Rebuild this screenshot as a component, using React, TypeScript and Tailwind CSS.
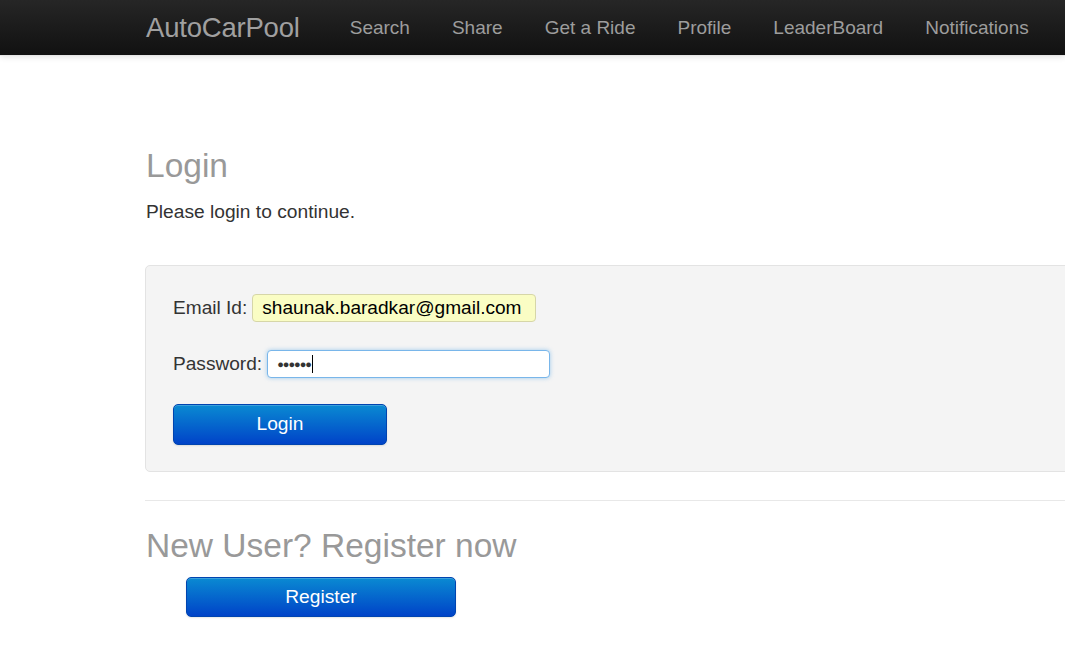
const NAV_ITEMS = ["Search", "Share", "Get a Ride", "Profile", "LeaderBoard", "Notifications"];

const btnClass =
  "rounded-[5px] border border-[#0044b0] bg-[linear-gradient(#0a8ad2,#0043c8)] text-[19.2px] text-white shadow-[inset_0_1px_0_rgba(255,255,255,0.2),0_1px_2px_rgba(0,0,0,0.1)]";

export default function App() {
  return (
    <div className="h-[652px] w-[1065px] overflow-hidden bg-white font-['Liberation_Sans',Arial,sans-serif] text-[#333]">
      <nav className="h-[56px] border-b border-[#e5e5e5] bg-[linear-gradient(#262626,#111111)] shadow-[0_1px_6px_rgba(0,0,0,0.12)]">
        <div className="flex h-[55px] items-center pl-[146px]">
          <span className="mr-[29px] text-[27.5px] tracking-[-0.2px] text-[#a0a0a0]">AutoCarPool</span>
          {NAV_ITEMS.map((item) => (
            <a key={item} className="px-[21px] pt-[2px] text-[19px] text-[#9d9d9d]">
              {item}
            </a>
          ))}
        </div>
      </nav>

      <main className="pl-[145px]">
        <h1 className="mt-[90px] pl-px text-[33.5px] leading-[40px] text-[#999]">Login</h1>
        <p className="mt-[13px] pl-px text-[19.2px] leading-[26px] text-[#333]">Please login to continue.</p>

        <form className="mt-[40px] h-[207px] w-[960px] rounded-[5px] border border-[#e3e3e3] bg-[#f4f4f4] pl-[27px] pt-[28px]">
          <div className="flex items-center">
            <label className="text-[19.1px] text-[#333]">Email Id:</label>
            <div className="ml-[5px] flex h-[28px] w-[284px] items-center rounded-[4px] border border-[#d6d6a8] bg-[#fafdc4] pl-[9px] text-[19.1px] text-black">
              shaunak.baradkar@gmail.com
            </div>
          </div>
          <div className="mt-[27px] flex items-center">
            <label className="text-[19.1px] text-[#333]">Password:</label>
            <div className="ml-[5px] flex h-[28px] w-[283px] items-center rounded-[4px] border border-[#79b6ea] bg-white pl-[9px] text-[11px] tracking-[-1px] text-[#333] shadow-[0_0_4px_rgba(102,175,233,0.6)]">
              ●●●●●●
              <span className="ml-[1px] h-[18px] w-px bg-black" />
            </div>
          </div>
          <button type="button" className={`${btnClass} mt-[26px] h-[41px] w-[214px]`}>
            Login
          </button>
        </form>

        <hr className="mt-[28px] w-[960px] border-t border-[#e8e8e8]" />

        <h2 className="mt-[25px] pl-px text-[33.5px] leading-[40px] text-[#999]">New User? Register now</h2>
        <button type="button" className={`${btnClass} ml-[41px] mt-[11px] h-[40px] w-[270px]`}>
          Register
        </button>
      </main>
    </div>
  );
}
